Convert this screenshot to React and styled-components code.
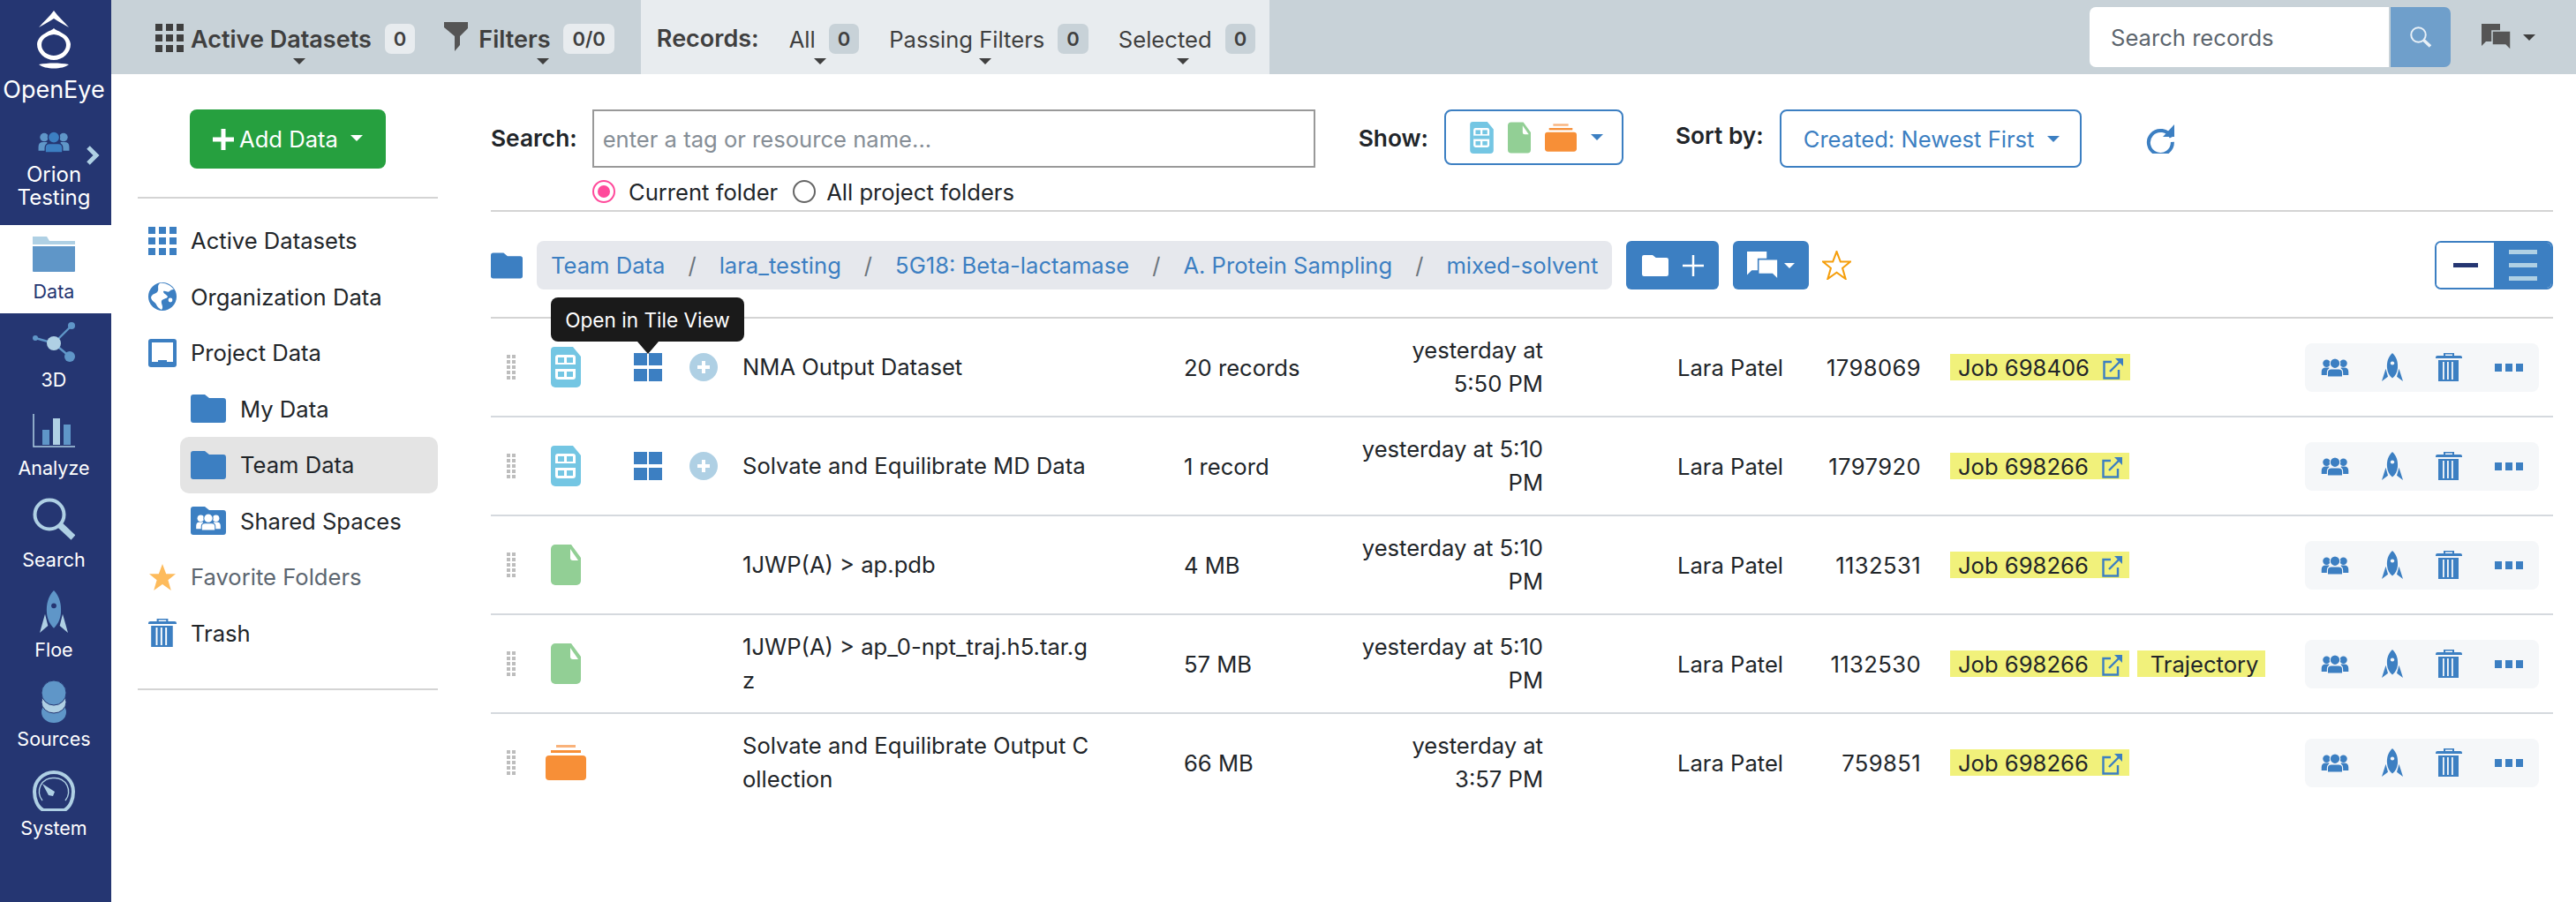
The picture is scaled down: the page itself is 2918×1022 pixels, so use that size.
import React from 'react'
import styled, { createGlobalStyle } from 'styled-components'

const blue = '#3c7fc2'
const mid = '#5f96c8'
const light = '#afd0e4'
const navy = '#253672'
const ink = '#212529'
const rule = '#d5d9de'

const Global = createGlobalStyle`
  html, body { margin: 0; padding: 0; background: #fff; }
  body { font-family: Inter, "Liberation Sans", sans-serif; font-size: 25.6px; color: ${ink}; }
  * { box-sizing: border-box; }
  svg { display: block; flex: none; }
`

const Page = styled.div`
  display: flex;
  width: 2918px;
  height: 1022px;
  overflow: hidden;
`

/* ---------- sidebar ---------- */
const Sidebar = styled.nav`
  width: 126px;
  flex: none;
  background: ${navy};
  color: #fff;
  padding-right: 4px;
  display: flex;
  flex-direction: column;
  position: relative;
`
const Brand = styled.div`
  height: 130px;
  padding-top: 12px;
  display: flex;
  flex-direction: column;
  align-items: center;
  font-size: 27px;
  line-height: 30px;
  span { margin-top: 7px; }
`
const Org = styled.div`
  height: 125px;
  padding-top: 19px;
  display: flex;
  flex-direction: column;
  align-items: center;
  font-size: 24px;
  line-height: 26px;
  text-align: center;
  position: relative;
  div { margin-top: 12px; }
`
const OrgChevron = styled.svg`
  position: absolute;
  left: 97px;
  top: 34px;
`
const SideItem = styled.a`
  height: ${p => p.$h}px;
  margin-right: -4px;
  padding: 9px 4px 0 0;
  display: flex;
  flex-direction: column;
  align-items: center;
  font-size: 21.5px;
  line-height: 26px;
  background: ${p => (p.$active ? '#fff' : 'transparent')};
  color: ${p => (p.$active ? navy : '#fff')};
`
const SideIcon = styled.div`
  height: 48px;
  margin-bottom: ${p => p.$gap}px;
  display: flex;
  align-items: center;
`

/* ---------- top bar ---------- */
const Right = styled.div`
  flex: 1;
  min-width: 0;
  display: flex;
  flex-direction: column;
`
const TopBar = styled.header`
  height: 84px;
  flex: none;
  background: #c8d2d8;
  display: flex;
  align-items: flex-start;
  padding-left: 50px;
  color: #3f3f3f;
`
const Menu = styled.div`
  display: flex;
  align-items: flex-start;
  gap: ${p => p.$gap || 8}px;
  margin-right: ${p => p.$after || 0}px;
  padding-top: 27px;
`
const MenuBody = styled.div`
  display: flex;
  flex-direction: column;
  align-items: center;
`
const MenuLine = styled.div`
  display: flex;
  align-items: center;
  gap: 15px;
  height: 34px;
  font-weight: ${p => (p.$strong ? 600 : 400)};
  font-size: ${p => (p.$strong ? 27 : 25.6)}px;
`
const Badge = styled.span`
  height: 34px;
  min-width: 34px;
  padding: 0 10px;
  border-radius: 7px;
  display: flex;
  align-items: center;
  justify-content: center;
  font-size: 22px;
  font-weight: 600;
  background: ${p => (p.$dark ? '#c8d2d8' : '#e8ecef')};
`
const Caret = styled.i`
  display: block;
  flex: none;
  width: 0;
  height: 0;
  border-left: ${p => p.$size || 7}px solid transparent;
  border-right: ${p => p.$size || 7}px solid transparent;
  border-top: ${p => p.$size || 7}px solid ${p => p.$color || '#3f3f3f'};
`
const DropCaret = styled(Caret)`
  margin-top: 5px;
  margin-right: 9px;
`
const Records = styled.div`
  height: 84px;
  background: #e8ecef;
  display: flex;
  align-items: flex-start;
  gap: 34px;
  padding: 27px 16px 0 18px;
`
const RecordsLabel = styled.div`
  height: 34px;
  line-height: 34px;
  font-weight: 600;
  font-size: 27px;
`
const TopSearch = styled.div`
  margin-left: auto;
  margin-top: 8px;
  display: flex;
  height: 68px;
`
const TopInput = styled.input`
  width: 339px;
  height: 68px;
  border: 0;
  outline: 0;
  padding: 0 24px;
  border-radius: 7px 0 0 7px;
  background: #fff;
  font: 400 25.6px Inter, sans-serif;
  &::placeholder { color: #5c656d; opacity: 1; }
`
const TopSearchButton = styled.div`
  width: 68px;
  margin-left: 2px;
  background: #6f9fcb;
  border-radius: 0 7px 7px 0;
  display: flex;
  align-items: center;
  justify-content: center;
`
const TopComments = styled.div`
  display: flex;
  align-items: center;
  gap: 13px;
  height: 84px;
  margin-left: 35px;
  margin-right: 46px;
`

/* ---------- left tree ---------- */
const Body = styled.div`
  flex: 1;
  display: flex;
  min-height: 0;
`
const Tree = styled.aside`
  width: 430px;
  flex: none;
  padding: 40px 60px 0 30px;
`
const AddButton = styled.button`
  display: flex;
  align-items: center;
  margin-left: 59px;
  width: 222px;
  height: 67px;
  padding: 0 0 0 26px;
  border: 0;
  border-radius: 8px;
  background: #26a03f;
  color: #fff;
  font: 400 25.6px Inter, sans-serif;
  svg { margin-right: 6px; }
  i { margin-left: 14px; margin-bottom: 3px; }
`
const Rule = styled.div`
  height: 2px;
  background: #d4d4d4;
  margin-top: ${p => p.$top || 0}px;
`
const TreeList = styled.ul`
  list-style: none;
  margin: 16px 0 0;
  padding: 0;
`
const TreeItem = styled.li`
  height: 63.5px;
  display: flex;
  align-items: center;
  gap: 16px;
  padding-left: 12px;
  margin-left: ${p => (p.$sub ? 48 : 0)}px;
  border-radius: 10px;
  background: ${p => (p.$current ? '#e4e4e4' : 'transparent')};
  color: ${p => (p.$muted ? '#5c6670' : ink)};
`

/* ---------- main ---------- */
const Main = styled.main`
  width: 2336px;
  flex: none;
  padding-top: 40px;
`
const Controls = styled.div`
  display: flex;
  align-items: flex-start;
`
const FieldLabel = styled.label`
  font-weight: 600;
  font-size: 26.3px;
  line-height: ${p => p.$line || 66}px;
  margin-right: ${p => p.$after}px;
  margin-left: ${p => p.$before || 0}px;
  white-space: nowrap;
`
const SearchInput = styled.input`
  width: 819px;
  height: 66px;
  border: 2px solid #999;
  outline: 0;
  padding: 0 10px;
  font: 400 25.6px Inter, sans-serif;
  &::placeholder { color: #868e96; opacity: 1; }
`
const OutlineButton = styled.div`
  width: ${p => p.$w}px;
  height: ${p => p.$h}px;
  border: 2px solid ${blue};
  border-radius: 8px;
  color: ${blue};
  display: flex;
  align-items: center;
  padding-left: ${p => p.$pad}px;
  gap: ${p => p.$gap}px;
`
const CaretSpaced = styled(Caret)`
  margin-left: ${p => p.$left}px;
`
const RefreshSlot = styled.div`
  margin-left: 73px;
  margin-top: 17px;
`
const Radios = styled.div`
  display: flex;
  align-items: center;
  height: 28px;
  margin: 13px 0 0 115px;
`
const Radio = styled.span`
  width: 26px;
  height: 26px;
  flex: none;
  border-radius: 50%;
  border: 2px solid ${p => (p.$on ? '#ff4a9b' : '#666')};
  padding: 4px;
  margin-right: ${p => (p.$on ? 15 : 12)}px;
  &::after {
    content: '';
    display: ${p => (p.$on ? 'block' : 'none')};
    width: 100%;
    height: 100%;
    border-radius: 50%;
    background: #ff4a9b;
  }
`
const RadioText = styled.span`
  margin-right: ${p => p.$after || 0}px;
`
const PathBar = styled.div`
  display: flex;
  align-items: center;
  height: 55px;
  margin-top: 33px;
`
const Crumbs = styled.div`
  height: 55px;
  margin-left: 16px;
  padding: 0 16px;
  display: flex;
  align-items: center;
  border-radius: 8px;
  background: #e6e8ed;
  color: ${blue};
`
const Slash = styled.span`
  color: #6c757d;
  margin: 0 26px;
`
const SolidButton = styled.div`
  height: 55px;
  width: ${p => p.$w}px;
  margin-left: 16px;
  border-radius: 6px;
  background: ${blue};
  display: flex;
  align-items: center;
  justify-content: center;
  gap: ${p => p.$gap || 0}px;
`
const StarSlot = styled.div`
  margin-left: 15px;
`
const ViewToggle = styled.div`
  margin-left: auto;
  display: flex;
  width: 134px;
  height: 55px;
  border: 2px solid ${blue};
  border-radius: 7px;
  overflow: hidden;
`
const ToggleCell = styled.div`
  flex: 1;
  display: flex;
  flex-direction: column;
  align-items: center;
  justify-content: center;
  gap: 10px;
  background: ${p => (p.$on ? blue : '#fff')};
`
const ToggleBar = styled.i`
  display: block;
  width: ${p => p.$w}px;
  height: 5px;
  background: ${p => p.$color};
`

/* ---------- table ---------- */
const TableRow = styled.div`
  display: grid;
  grid-template-columns: 68px 94px 63px 60px 500px 180px 227px 152px 276px 435px 265px;
  align-items: center;
  height: 112px;
  border-top: 2px solid ${rule};
  &:first-child {
    height: 110px;
    border-top: 0;
  }
`
const Handle = styled.div`
  padding-left: 18px;
`
const IconCell = styled.div`
  display: flex;
  position: relative;
`
const CollectionNudge = styled.div`
  margin-left: -6px;
`
const Name = styled.div`
  width: 398px;
  line-height: 38px;
  word-break: break-all;
`
const DateCell = styled.div`
  line-height: 38px;
  text-align: right;
  padding-left: 19px;
`
const Owner = styled.div`
  padding-left: 152px;
  white-space: nowrap;
  width: 152px;
`
const IdCell = styled.div`
  text-align: right;
  letter-spacing: 0.4px;
`
const Tags = styled.div`
  display: flex;
  gap: 9px;
  padding-left: 33px;
`
const Tag = styled.span`
  height: 30px;
  padding: 0 8px 0 9px;
  display: flex;
  align-items: center;
  gap: 15px;
  background: #f1f17b;
  white-space: nowrap;
`
const PlainTag = styled(Tag)`
  padding: 0 0 0 15px;
  width: 145px;
`
const Actions = styled.div`
  height: 55px;
  border-radius: 8px;
  background: #f5f7f9;
  display: flex;
  align-items: center;
  padding-left: 18px;
  gap: 37px;
`
const Tooltip = styled.div`
  position: absolute;
  left: -94px;
  bottom: 45px;
  width: 219px;
  height: 50px;
  border-radius: 8px;
  background: #1a1a1a;
  color: #fff;
  font-size: 22.6px;
  display: flex;
  align-items: center;
  justify-content: center;
  white-space: nowrap;
  &::after {
    content: '';
    position: absolute;
    left: 98px;
    top: 100%;
    border-left: 12px solid transparent;
    border-right: 12px solid transparent;
    border-top: 14px solid #1a1a1a;
  }
`

/* ---------- drawings ---------- */
const Grid9 = ({ color, size = 32 }) => (
  <svg width={size} height={size} viewBox="0 0 32 32" fill={color}>
    {[0, 12, 24].map(y => [0, 12, 24].map(x => <rect key={`${x}-${y}`} x={x} y={y} width="8" height="8" />))}
  </svg>
)
const Funnel = () => (
  <svg width="27" height="33" viewBox="0 0 27 33" fill="#555" style={{ marginTop: -2 }}>
    <path d="M0 0H27V7L18 16V26L12 33V16L0 6Z" />
  </svg>
)
const Folder = ({ w = 40, h = 32, color = blue, children }) => (
  <svg width={w} height={h} viewBox="0 0 40 32">
    <path fill={color} d="M3 0H16L21 4H37a3 3 0 0 1 3 3V29a3 3 0 0 1-3 3H3a3 3 0 0 1-3-3V3a3 3 0 0 1 3-3Z" />
    {children}
  </svg>
)
const People = ({ w = 32, h = 21, side = blue, center = blue, gap = '#f5f7f9', x = 0, y = 0 }) => (
  <svg x={x} y={y} width={w} height={h} viewBox="0 0 32 22">
    <circle cx="6" cy="6" r="4.4" fill={side} />
    <circle cx="26" cy="6" r="4.4" fill={side} />
    <path fill={side} d="M0 20V16Q0 11 5 11H9L9 20ZM32 20V16Q32 11 27 11H23L23 20Z" />
    <circle cx="16" cy="6" r="6" fill={center} stroke={gap} strokeWidth="1.2" />
    <path fill={center} stroke={gap} strokeWidth="1.2" d="M7 22V17Q7 12.5 11.5 12.5H20.5Q25 12.5 25 17V22Z" />
  </svg>
)
const Rocket = ({ w = 24, h = 32, body = blue, fin = blue, hole = '#f5f7f9' }) => (
  <svg width={w} height={h} viewBox="0 0 24 36" preserveAspectRatio="none">
    <path fill={fin} d="M4.5 20L0 36L7 30ZM19.5 20L24 36L17 30Z" />
    <path fill={body} d="M12 0C17 5 18.5 12 18 19C17.7 24 15.5 29 12 32C8.5 29 6.3 24 6 19C5.5 12 7 5 12 0Z" />
    <circle cx="12" cy="13" r="2.2" fill={hole} />
  </svg>
)
const Trash = ({ w = 30, h = 32, fill = blue, bg = '#f5f7f9' }) => (
  <svg width={w} height={h} viewBox="0 0 30 32" preserveAspectRatio="none">
    <path fill={fill} fillRule="evenodd" d="M9 3V0H21V3H28Q30 3 30 5V6H0V5Q0 3 2 3ZM11 1.5V3H19V1.5Z" />
    <rect x="3" y="8" width="23" height="24" fill={fill} />
    {[8, 13, 18].map(x => <rect key={x} x={x} y="10" width="1.8" height="20" fill={bg} />)}
  </svg>
)
const Dots = () => (
  <svg width="32" height="9" viewBox="0 0 32 9" fill={blue}>
    <rect width="8" height="9" /><rect x="12" width="8" height="9" /><rect x="24" width="8" height="9" />
  </svg>
)
const ExternalLink = () => (
  <svg width="23" height="24" viewBox="0 0 23 24" fill="none" stroke={blue} strokeWidth="2.4" style={{ marginTop: 4 }}>
    <path d="M10 4H1.5V22.5H18V13" />
    <path d="M8 15L20 3" />
    <path fill={blue} stroke="none" d="M14 0H23V9Z" />
  </svg>
)
const DatasetFile = ({ w = 34, h = 46 }) => (
  <svg width={w} height={h} viewBox="0 0 34 46">
    <path fill="#74c6e3" d="M4 0H25L34 11V41a5 5 0 0 1-5 5H5a5 5 0 0 1-5-5V4a4 4 0 0 1 4-4Z" />
    <rect x="5" y="9" width="23" height="28" rx="3" fill="#fff" />
    <g fill="#74c6e3">
      <rect x="8" y="12" width="7" height="6" /><rect x="18" y="12" width="7" height="6" />
      <rect x="5" y="20" width="23" height="5" />
      <rect x="8" y="28" width="7" height="6" /><rect x="18" y="28" width="7" height="6" />
    </g>
  </svg>
)
const GreenFile = ({ w = 34, h = 46 }) => (
  <svg width={w} height={h} viewBox="0 0 34 46">
    <path fill="#92cf95" d="M5 0H23L34 15V41a5 5 0 0 1-5 5H5a5 5 0 0 1-5-5V5a5 5 0 0 1 5-5Z" />
    <path fill="#fff" d="M22 5L31 18H25a3 3 0 0 1-3-3Z" />
  </svg>
)
const Collection = ({ w = 46, h = 40 }) => (
  <svg width={w} height={h} viewBox="0 0 46 40">
    <rect x="12" y="0" width="22" height="3" fill="#f9b27a" />
    <rect x="6" y="6" width="34" height="3" fill="#f78f37" />
    <rect x="0" y="12" width="46" height="28" rx="4" fill="#f78f37" />
  </svg>
)
const TileGrid = () => (
  <svg width="32" height="32" viewBox="0 0 32 32" fill={blue}>
    <rect width="15" height="14" /><rect x="17" width="15" height="14" />
    <rect y="18" width="15" height="14" /><rect x="17" y="18" width="15" height="14" />
  </svg>
)
const PlusCircle = () => (
  <svg width="32" height="32" viewBox="0 0 32 32">
    <circle cx="16" cy="16" r="16" fill={light} />
    <path d="M16 9V23M9 16H23" stroke="#fff" strokeWidth="4" />
  </svg>
)
const DragDots = () => (
  <svg width="10" height="28" viewBox="0 0 10 28" fill="#bdbdbd">
    {[0, 6, 12, 18, 24].map(y => [0, 6].map(x => <rect key={`${x}${y}`} x={x} y={y} width="4" height="4" />))}
  </svg>
)
const Globe = () => (
  <svg width="32" height="32" viewBox="0 0 32 32">
    <circle cx="16" cy="16" r="16" fill={blue} />
    <path fill="#fff" d="M13 1C9 4 13 8 10 11C8 13 4 13 3 17C4 22 8 22 9 25C10 28 13 30 15 31C18 28 14 24 15 21C16 18 21 19 22 16C20 13 17 13 17 10C20 9 22 12 24 10C26 8 28 8 29 8C25 3 19 0 13 1Z" />
    <circle cx="25" cy="20" r="2.4" fill="#fff" />
  </svg>
)
const ProjectBox = () => (
  <svg width="32" height="32" viewBox="0 0 32 32">
    <rect width="32" height="32" rx="3" fill={blue} />
    <path fill="#fff" d="M4 4H28V26H21V24H11V26H4Z" />
  </svg>
)
const StarIcon = ({ size = 32, fill, stroke = 'none' }) => (
  <svg width={size} height={size} viewBox="0 0 32 32">
    <path fill={fill} stroke={stroke} strokeWidth="2" d="M16 1L20.2 12.2H31L22.4 19.2L25.8 31L16 24L6.2 31L9.6 19.2L1 12.2H11.8Z" />
  </svg>
)
const Comments = ({ color, bg, w = 34, h = 30 }) => (
  <svg width={w} height={h} viewBox="0 0 34 30">
    <path fill={color} d="M0 0H21V20H5L0 25Z" />
    <path fill={color} stroke={bg} strokeWidth="1.5" d="M12 8H33V24.5V30L27 24H12Z" />
  </svg>
)

const Logo = () => (
  <svg width="40" height="68" viewBox="0 0 40 68" fill="#fff">
    <path d="M20 0C25 7 31 12 37 19C31 16 25 12 20 9C15 12 9 16 3 19C9 12 15 7 20 0Z" />
    <path fillRule="evenodd" d="M20 20C22 23 38 26 39 38C39 48 30 56 20 56C10 56 1 48 1 38C2 26 18 23 20 20ZM20 27C12 28 6 32 6 39C6 46 13 51 20 51C27 51 34 46 34 39C34 32 28 28 20 27Z" />
    <path d="M3 61C14 59 26 59 37 61C30 67 10 67 3 61Z" />
  </svg>
)
const SideFolder = () => (
  <svg width="48" height="40" viewBox="0 0 48 40">
    <path fill={light} d="M0 0H16L19 5H48V9H0Z" />
    <path fill={mid} d="M0 11H48V39a1 1 0 0 1-1 1H1a1 1 0 0 1-1-1Z" />
  </svg>
)
const Molecule = () => (
  <svg width="48" height="46" viewBox="0 0 48 46">
    <path d="M3 18L24 24L45 3M24 24L42 39" stroke={mid} strokeWidth="2.4" fill="none" />
    <circle cx="3" cy="18" r="3" fill={mid} />
    <circle cx="44" cy="4" r="4" fill={mid} />
    <circle cx="42" cy="39" r="6" fill={mid} />
    <circle cx="24" cy="24" r="8" fill={light} />
  </svg>
)
const BarChart = () => (
  <svg width="48" height="38" viewBox="0 0 48 38">
    <path d="M1 0V37H48" stroke={light} strokeWidth="1.5" fill="none" />
    <rect x="11" y="18" width="8" height="17" fill={mid} />
    <rect x="23" y="5" width="8" height="30" fill={light} />
    <rect x="35" y="12" width="8" height="23" fill={mid} />
  </svg>
)
const Magnifier = ({ size = 48, color = light, width = 4 }) => (
  <svg width={size} height={size} viewBox="0 0 48 48" fill="none" stroke={color}>
    <circle cx="19" cy="19" r="16.5" strokeWidth={width} />
    <path d="M31 31L46 45" strokeWidth={width * 1.8} />
  </svg>
)
const Cylinders = () => (
  <svg width="28" height="48" viewBox="0 0 28 48">
    <rect y="24" width="28" height="24" rx="14" fill={mid} />
    <rect y="12" width="28" height="25" rx="14" fill={light} stroke={navy} strokeWidth="1" />
    <circle cx="14" cy="14" r="14" fill={mid} stroke={navy} strokeWidth="1" />
  </svg>
)
const Gauge = () => (
  <svg width="48" height="46" viewBox="0 0 48 46" fill="none">
    <path d="M12 45C5 41 2 32 2 24A22 22 0 0 1 46 24C46 32 43 41 36 45Z" stroke={light} strokeWidth="4" />
    <path d="M11 34A15.5 15.5 0 0 1 24 8.5A15.5 15.5 0 0 1 37 34" stroke={light} strokeWidth="1.4" />
    <path fill={light} d="M11 15L25 24L23 29L18 28Z" />
  </svg>
)
const Refresh = () => (
  <svg width="33" height="33" viewBox="0 0 33 33" fill="none">
    <path d="M28 13A13.5 13.5 0 1 0 30 18" stroke={blue} strokeWidth="4" transform="rotate(8 16.5 18)" />
    <path fill={blue} d="M32 0V14H19Z" />
  </svg>
)

const sideItems = [
  { label: 'Data', h: 100, gap: 5, icon: <SideFolder />, active: true },
  { label: '3D', h: 100, gap: 5, icon: <Molecule /> },
  { label: 'Analyze', h: 100, gap: 5, icon: <BarChart /> },
  { label: 'Search', h: 105, gap: 9, icon: <Magnifier /> },
  { label: 'Floe', h: 102, gap: 6, icon: <Rocket w={32} h={48} body={mid} fin={light} hole={navy} /> },
  { label: 'Sources', h: 101, gap: 5, icon: <Cylinders /> },
  { label: 'System', h: 100, gap: 5, icon: <Gauge /> },
]

const rows = [
  { type: 'dataset', name: 'NMA Output Dataset', size: '20 records', date: 'yesterday at 5:50 PM', id: '1798069', job: 'Job 698406', tip: true },
  { type: 'dataset', name: 'Solvate and Equilibrate MD Data', size: '1 record', date: 'yesterday at 5:10 PM', id: '1797920', job: 'Job 698266' },
  { type: 'file', name: '1JWP(A) > ap.pdb', size: '4 MB', date: 'yesterday at 5:10 PM', id: '1132531', job: 'Job 698266' },
  { type: 'file', name: '1JWP(A) > ap_0-npt_traj.h5.tar.gz', size: '57 MB', date: 'yesterday at 5:10 PM', id: '1132530', job: 'Job 698266', extra: 'Trajectory' },
  { type: 'collection', name: 'Solvate and Equilibrate Output Collection', size: '66 MB', date: 'yesterday at 3:57 PM', id: '759851', job: 'Job 698266' },
]

const typeIcon = { dataset: <DatasetFile />, file: <GreenFile />, collection: <CollectionNudge><Collection /></CollectionNudge> }

const DropMenu = ({ label, count, dark, strong }) => (
  <MenuBody>
    <MenuLine $strong={strong}>{label}<Badge $dark={dark}>{count}</Badge></MenuLine>
    <DropCaret />
  </MenuBody>
)

export default function App() {
  return (
    <Page>
      <Global />
      <Sidebar>
        <Brand><Logo /><span>OpenEye</span></Brand>
        <Org>
          <People w={48} h={24} side={mid} center={blue} gap={navy} />
          <div>Orion<br />Testing</div>
          <OrgChevron width="16" height="24" viewBox="0 0 16 24" fill="none">
            <path d="M3 3L12 12L3 21" stroke={light} strokeWidth="5" />
          </OrgChevron>
        </Org>
        {sideItems.map(item => (
          <SideItem key={item.label} $h={item.h} $active={item.active}>
            <SideIcon $gap={item.gap}>{item.icon}</SideIcon>
            {item.label}
          </SideItem>
        ))}
      </Sidebar>

      <Right>
        <TopBar>
          <Menu $after={33}><Grid9 color="#3f3f3f" /><DropMenu label="Active Datasets" count="0" strong /></Menu>
          <Menu $gap={12} $after={30}><Funnel /><DropMenu label="Filters" count="0/0" strong /></Menu>
          <Records>
            <RecordsLabel>Records:</RecordsLabel>
            <DropMenu label="All" count="0" dark />
            <DropMenu label="Passing Filters" count="0" dark />
            <DropMenu label="Selected" count="0" dark />
          </Records>
          <TopSearch>
            <TopInput placeholder="Search records" />
            <TopSearchButton><Magnifier size={24} color="#e8f0f7" width={4} /></TopSearchButton>
          </TopSearch>
          <TopComments>
            <Comments color="#555" bg="#c8d2d8" />
            <Caret />
          </TopComments>
        </TopBar>

        <Body>
          <Tree>
            <AddButton>
              <svg width="24" height="24" viewBox="0 0 24 24"><path d="M12 0V24M0 12H24" stroke="#fff" strokeWidth="5" /></svg>
              Add Data
              <Caret $color="#fff" />
            </AddButton>
            <Rule $top={32} />
            <TreeList>
              <TreeItem><Grid9 color={blue} />Active Datasets</TreeItem>
              <TreeItem><Globe />Organization Data</TreeItem>
              <TreeItem><ProjectBox />Project Data</TreeItem>
              <TreeItem $sub><Folder />My Data</TreeItem>
              <TreeItem $sub $current><Folder />Team Data</TreeItem>
              <TreeItem $sub>
                <Folder><People x={6} y={8} w={28} h={19} side="#fff" center="#fff" gap={blue} /></Folder>
                Shared Spaces
              </TreeItem>
              <TreeItem $muted><StarIcon fill="#fdbb5c" />Favorite Folders</TreeItem>
              <TreeItem><Trash w={32} bg="#fff" />Trash</TreeItem>
            </TreeList>
            <Rule $top={31} />
          </Tree>

          <Main>
            <Controls>
              <FieldLabel $after={17}>Search:</FieldLabel>
              <SearchInput placeholder="enter a tag or resource name..." />
              <FieldLabel $before={49} $after={18}>Show:</FieldLabel>
              <OutlineButton $w={203} $h={63} $pad={27} $gap={16}>
                <DatasetFile w={27} h={36} />
                <GreenFile w={26} h={36} />
                <Collection w={36} h={32} />
                <Caret $color={blue} />
              </OutlineButton>
              <FieldLabel $before={59} $line={60} $after={18}>Sort by:</FieldLabel>
              <OutlineButton $w={342} $h={66} $pad={25} $gap={0}>
                Created: Newest First
                <CaretSpaced $color={blue} $left={15} />
              </OutlineButton>
              <RefreshSlot><Refresh /></RefreshSlot>
            </Controls>
            <Radios>
              <Radio $on /><RadioText $after={17}>Current folder</RadioText>
              <Radio /><RadioText>All project folders</RadioText>
            </Radios>
            <Rule $top={7} />
            <PathBar>
              <Folder w={36} h={30} />
              <Crumbs>
                Team Data<Slash>/</Slash>lara_testing<Slash>/</Slash>5G18: Beta-lactamase<Slash>/</Slash>A. Protein Sampling<Slash>/</Slash>mixed-solvent
              </Crumbs>
              <SolidButton $w={105} $gap={16}>
                <Folder w={30} h={26} color="#fff" />
                <svg width="24" height="24" viewBox="0 0 24 24"><path d="M12 0V24M0 12H24" stroke="#fff" strokeWidth="2.5" /></svg>
              </SolidButton>
              <SolidButton $w={86} $gap={6}>
                <Comments color="#fff" bg={blue} w={36} h={32} />
                <Caret $color="#fff" $size={6} />
              </SolidButton>
              <StarSlot><StarIcon size={33} fill="#fff" stroke="#f59e0b" /></StarSlot>
              <ViewToggle>
                <ToggleCell><ToggleBar $w={28} $color={navy} /></ToggleCell>
                <ToggleCell $on>
                  <ToggleBar $w={32} $color={light} />
                  <ToggleBar $w={32} $color={light} />
                  <ToggleBar $w={32} $color={light} />
                </ToggleCell>
              </ViewToggle>
            </PathBar>
            <Rule $top={31} />
            <div>
              {rows.map(row => (
                <TableRow key={row.id}>
                  <Handle><DragDots /></Handle>
                  <IconCell>{typeIcon[row.type]}</IconCell>
                  <IconCell>
                    {row.type === 'dataset' && <TileGrid />}
                    {row.tip && <Tooltip>Open in Tile View</Tooltip>}
                  </IconCell>
                  <IconCell>{row.type === 'dataset' && <PlusCircle />}</IconCell>
                  <Name>{row.name}</Name>
                  <div>{row.size}</div>
                  <DateCell>{row.date}</DateCell>
                  <Owner>Lara Patel</Owner>
                  <IdCell>{row.id}</IdCell>
                  <Tags>
                    <Tag>{row.job}<ExternalLink /></Tag>
                    {row.extra && <PlainTag>{row.extra}</PlainTag>}
                  </Tags>
                  <Actions>
                    <People />
                    <Rocket />
                    <Trash />
                    <Dots />
                  </Actions>
                </TableRow>
              ))}
            </div>
          </Main>
        </Body>
      </Right>
    </Page>
  )
}
